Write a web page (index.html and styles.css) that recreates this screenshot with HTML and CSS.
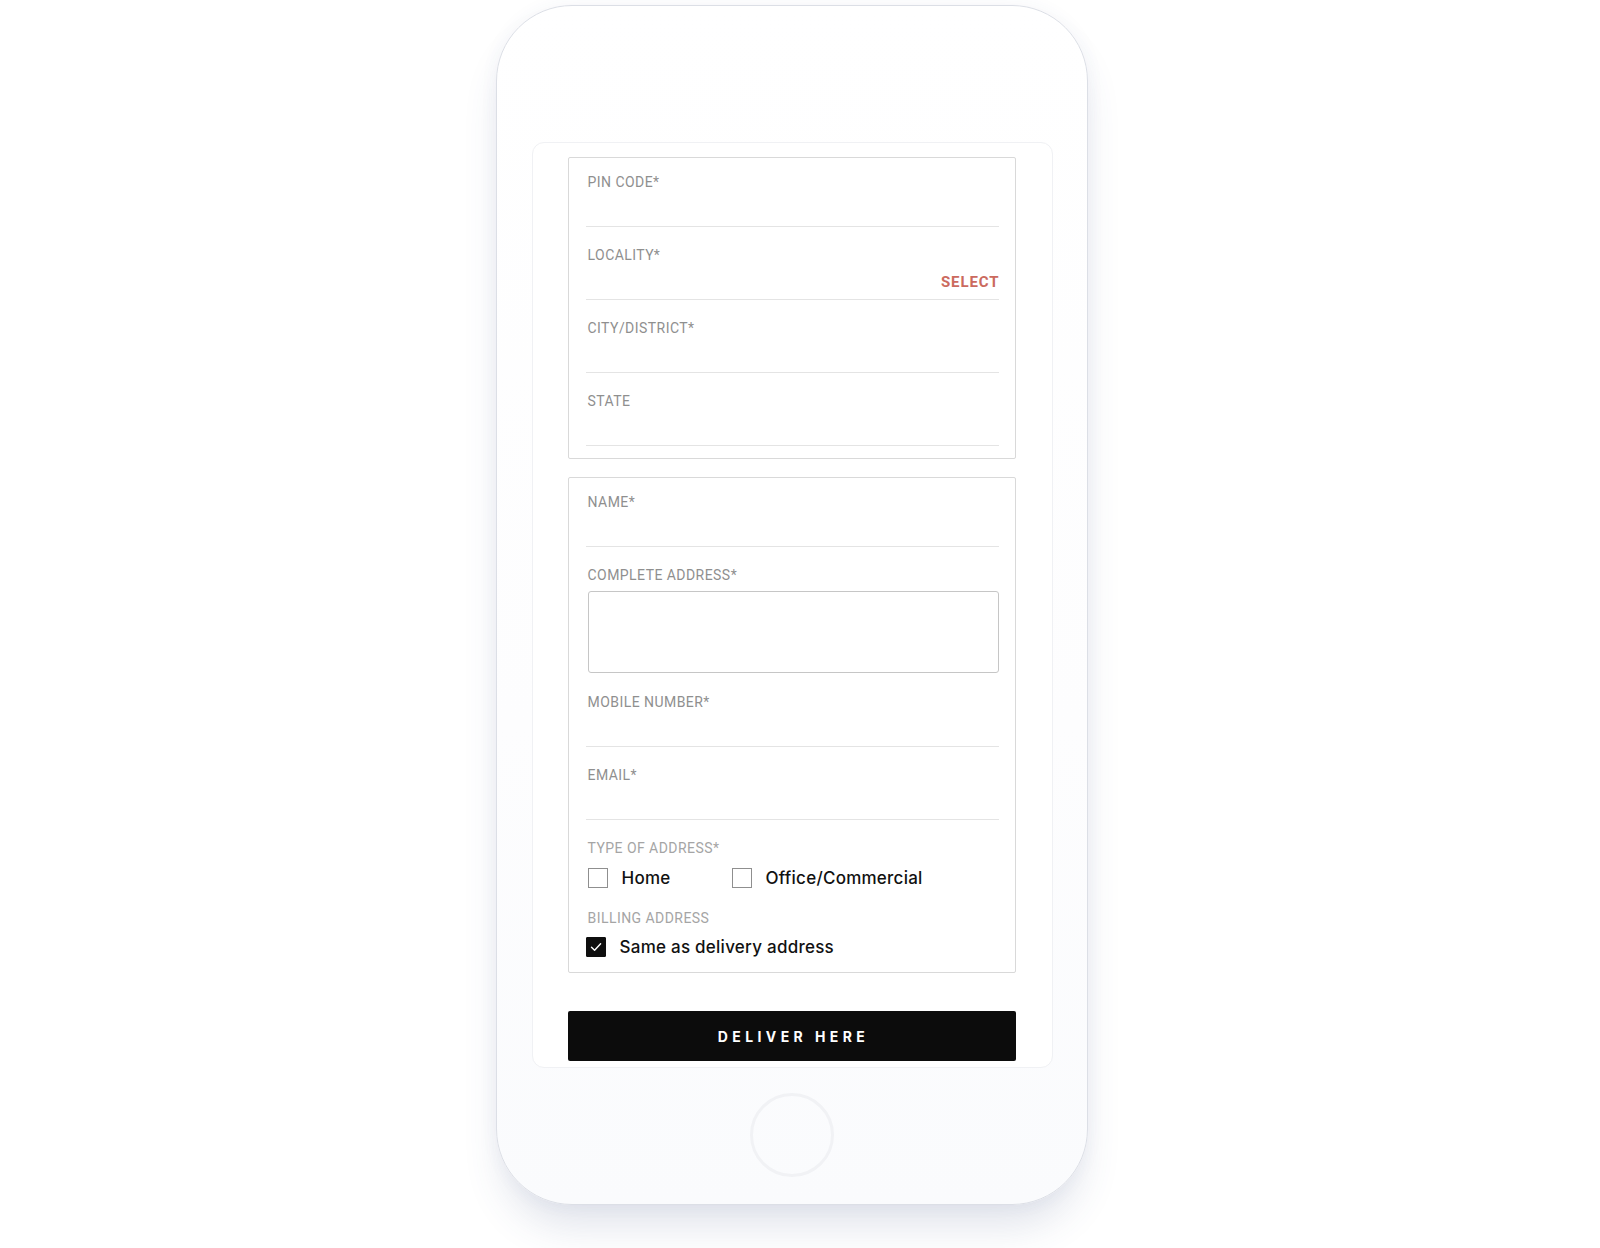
FILE: index.html
```html
<!DOCTYPE html>
<html lang="en">
<head>
<meta charset="utf-8">
<title>Delivery address</title>
<link rel="stylesheet" href="styles.css">
</head>
<body>
<div class="stage">
  <div class="phone">
    <div class="card">
      <div class="box">
        <div class="field">
          <div class="label">PIN CODE*</div>
          <div class="input"></div>
        </div>
        <div class="field">
          <div class="label">LOCALITY*</div>
          <div class="input"><span class="select">SELECT</span></div>
        </div>
        <div class="field">
          <div class="label">CITY/DISTRICT*</div>
          <div class="input"></div>
        </div>
        <div class="field">
          <div class="label">STATE</div>
          <div class="input"></div>
        </div>
      </div>

      <div class="box box-second">
        <div class="field">
          <div class="label">NAME*</div>
          <div class="input"></div>
        </div>
        <div class="group group-address">
          <div class="label">COMPLETE ADDRESS*</div>
          <div class="textarea"></div>
        </div>
        <div class="field">
          <div class="label">MOBILE NUMBER*</div>
          <div class="input"></div>
        </div>
        <div class="field">
          <div class="label">EMAIL*</div>
          <div class="input"></div>
        </div>
        <div class="group">
          <div class="label label-light">TYPE OF ADDRESS*</div>
          <div class="check-row">
            <label class="option option-home"><span class="checkbox"></span><span class="option-text">Home</span></label>
            <label class="option"><span class="checkbox"></span><span class="option-text">Office/Commercial</span></label>
          </div>
        </div>
        <div class="group group-billing">
          <div class="label label-light">BILLING ADDRESS</div>
          <div class="check-row check-row-billing">
            <label class="option"><span class="checkbox checked"><svg viewBox="0 0 20 20" width="20" height="20"><path d="M5.5 10.2 L8.6 13.2 L14.6 6.8" fill="none" stroke="#fff" stroke-width="1.4" stroke-linecap="round" stroke-linejoin="round"/></svg></span><span class="option-text">Same as delivery address</span></label>
          </div>
        </div>
      </div>

      <button class="deliver">DELIVER HERE</button>
    </div>
    <div class="home-button"></div>
  </div>
</div>
</body>
</html>
```

FILE: styles.css
```css
html, body {
  margin: 0;
  padding: 0;
  background: #ffffff;
}

body {
  font-family: "Roboto", "Liberation Sans", sans-serif;
}

.stage {
  display: flex;
  justify-content: flex-start;
  padding: 5px 0 0 496px;
  height: 1248px;
  box-sizing: border-box;
}

.phone {
  width: 592px;
  height: 1200px;
  box-sizing: border-box;
  border: 1px solid #dcdfe6;
  border-radius: 76px;
  background: linear-gradient(180deg, #ffffff 0%, #fdfdfe 60%, #fafbfd 100%);
  box-shadow: 0 28px 40px -8px rgba(60, 80, 130, 0.16), 0 0 18px rgba(60, 80, 130, 0.05);
  display: flex;
  flex-direction: column;
  align-items: center;
}

.card {
  margin-top: 136px;
  width: 521px;
  box-sizing: border-box;
  border: 1px solid #f0f1f4;
  border-radius: 12px;
  background: #ffffff;
  padding: 14px 36px 6px 35px;
  display: flex;
  flex-direction: column;
}

.box {
  border: 1px solid #d9d9d9;
  border-radius: 2px;
  padding: 16px 16px 12px 17px;
  display: flex;
  flex-direction: column;
  gap: 20px;
}

.box-second {
  margin-top: 18px;
  padding-bottom: 15px;
}

.field {
  display: flex;
  flex-direction: column;
  border-bottom: 1px solid #e4e4e4;
}

.label {
  font-size: 14px;
  line-height: 16px;
  color: #8f8f8f;
  padding-left: 2px;
  letter-spacing: 0.45px;
}

.label-light {
  color: #a5a5a5;
}

.input {
  height: 36px;
  box-sizing: border-box;
  padding-top: 11px;
  display: flex;
  justify-content: flex-end;
}

.select {
  font-size: 15px;
  line-height: 16px;
  font-weight: 700;
  color: #cb6a5e;
  letter-spacing: 0.9px;
  margin-right: -1px;
}

.group {
  display: flex;
  flex-direction: column;
}

.group-address {
  margin-bottom: 1px;
}

.textarea {
  margin-top: 8px;
  margin-left: 2px;
  height: 82px;
  box-sizing: border-box;
  border: 1px solid #c6c6c6;
  border-radius: 3px;
}

.check-row {
  display: flex;
  margin-top: 12px;
  margin-left: 2px;
}

.group-billing {
  margin-top: 2px;
}

.check-row-billing {
  margin-top: 11px;
  margin-left: 0;
}

.option {
  display: flex;
  align-items: center;
  gap: 14px;
}

.option-home {
  width: 144px;
}

.checkbox {
  width: 20px;
  height: 20px;
  box-sizing: border-box;
  border: 1px solid #8f8f8f;
  display: flex;
  flex: none;
}

.checkbox.checked {
  background: #0e0e0e;
  border-color: #0e0e0e;
  border-radius: 1px;
}

.checkbox.checked svg {
  margin: -1px;
}

.option-text {
  font-family: "Inter", "Roboto", sans-serif;
  font-size: 17px;
  line-height: 20px;
  font-weight: 500;
  color: #111111;
  letter-spacing: 0.25px;
}

.deliver {
  margin-top: 38px;
  height: 50px;
  border: none;
  border-radius: 2px;
  background: #0c0c0c;
  color: #ffffff;
  font-family: "Inter", "Roboto", sans-serif;
  font-size: 14px;
  font-weight: 700;
  letter-spacing: 4.4px;
  padding: 0 0 0 4px;
  cursor: pointer;
}

.home-button {
  margin-top: 25px;
  width: 84px;
  height: 84px;
  box-sizing: border-box;
  border: 3px solid #f1f2f5;
  border-radius: 50%;
}
```
